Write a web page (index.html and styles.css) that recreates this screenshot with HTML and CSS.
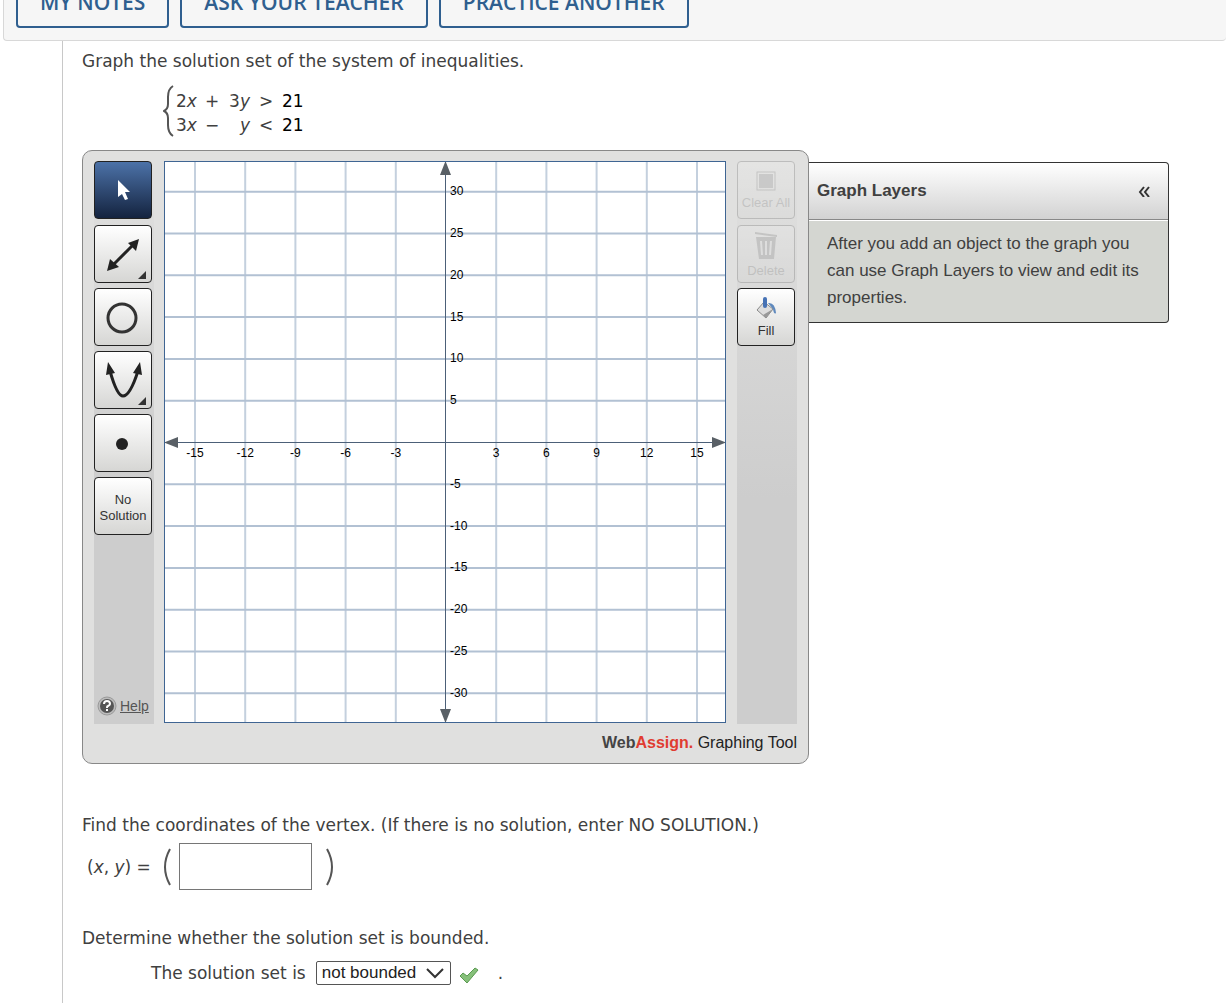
FILE: index.html
```html
<!DOCTYPE html>
<html lang="en">
<head>
  <meta charset="UTF-8">
  <meta name="viewport" content="width=device-width, initial-scale=1.0">
  <title>Systems of Inequalities</title>
  <link rel="stylesheet" href="styles.css">
</head>
<body>
  <div class="toolbar">
    <button type="button">MY NOTES</button>
    <button type="button">ASK YOUR TEACHER</button>
    <button type="button">PRACTICE ANOTHER</button>
  </div>

  <main class="question">
    <p>Graph the solution set of the system of inequalities.</p>

    <div class="system">
      <svg class="brace" width="12" height="52" viewBox="0 0 12 52">
        <path d="M10 1 Q5 4 5 12 V19 Q5 24 1 26 Q5 28 5 33 V40 Q5 48 10 51" />
      </svg>
      <div class="equations">
        <span>2<i>x</i></span><span class="op">+</span><span class="term">3<i>y</i></span><span class="op">&gt;</span><span class="num">21</span>
        <span>3<i>x</i></span><span class="op">−</span><span class="term"><i>y</i></span><span class="op">&lt;</span><span class="num">21</span>
      </div>
    </div>

    <div class="graph-area">
      <div class="graph-tool">
        <div class="panels">
          <div class="strip">
            <button type="button" class="tool selected" aria-label="Select">
              <svg width="56" height="56" viewBox="0 0 56 56">
                <path fill="#fff" d="M23 17 V34 L27 31 L30 37 L33 36 L30 29 L35 29 Z" />
              </svg>
            </button>
            <button type="button" class="tool" aria-label="Line">
              <svg width="56" height="56" viewBox="0 0 56 56">
                <path stroke="#222" stroke-width="3" d="M18 38 L38 18" />
                <path fill="#222" d="M44 12 L41 24 L33 16 Z M12 44 L15 32 L24 40 Z" />
                <path fill="#333" d="M51 44 V52 H43 Z" />
              </svg>
            </button>
            <button type="button" class="tool" aria-label="Circle">
              <svg width="56" height="56" viewBox="0 0 56 56">
                <circle cx="27" cy="28" r="14" fill="none" stroke="#333" stroke-width="3" />
              </svg>
            </button>
            <button type="button" class="tool" aria-label="Parabola">
              <svg width="56" height="56" viewBox="0 0 56 56">
                <path fill="none" stroke="#222" stroke-width="3" d="M15 18 Q22 43 28 43 Q35 43 43 18" />
                <path fill="#222" d="M13 9 L20 20 L11 22 Z M45 9 L47 22 L38 20 Z" />
                <path fill="#333" d="M51 44 V52 H43 Z" />
              </svg>
            </button>
            <button type="button" class="tool" aria-label="Point">
              <svg width="56" height="56" viewBox="0 0 56 56">
                <circle cx="27" cy="28" r="6" fill="#222" />
              </svg>
            </button>
            <button type="button" class="tool no-solution"><span>No<br>Solution</span></button>
            <a class="help" href="#">
              <svg width="20" height="20" viewBox="0 0 20 20">
                <circle cx="10" cy="10" r="9" fill="#bbb" stroke="#999" />
                <circle cx="10" cy="10" r="7" fill="#555" />
                <path fill="none" stroke="#fff" stroke-width="2" d="M7 8 Q7 5 10 5 Q13 5 13 8 Q13 9 11 10 Q10 10 10 12 M10 13 V15" />
              </svg>
              <span>Help</span>
            </a>
          </div>

          <svg class="plot" id="plot" width="562" height="562" viewBox="0 0 562 562"></svg>

          <div class="strip">
            <button type="button" class="tool" disabled>
              <svg width="20" height="20" viewBox="0 0 20 20">
                <rect x="1" y="1" width="18" height="18" fill="none" stroke="#333" />
                <rect x="3" y="3" width="14" height="14" fill="#555" />
              </svg>
              <span>Clear All</span>
            </button>
            <button type="button" class="tool" disabled>
              <svg width="24" height="28" viewBox="0 0 24 28">
                <path fill="#444" d="M1 1 L23 4 V6 L1 3 Z M2 6 H22 L20 28 H5 Z" />
                <path stroke="#eee" stroke-width="2" d="M7 10 L8 24 M12 10 V24 M17 10 L16 24" />
              </svg>
              <span>Delete</span>
            </button>
            <button type="button" class="tool">
              <svg width="22" height="22" viewBox="0 0 22 22">
                <path fill="#ddd" stroke="#888" d="M9 5 L18 12 L11 21 L2 13 Z" />
                <path fill="#999" d="M18 12 L11 21 L8 18 Z" />
                <path fill="#5f89bd" d="M13 6 Q20 5 21 16 Q19 18 18 12 Z" />
                <rect x="8" y="0" width="4" height="11" rx="2" fill="#4672b5" />
              </svg>
              <span>Fill</span>
            </button>
          </div>
        </div>
        <div class="brand"><b>Web<em>Assign.</em></b> Graphing Tool</div>
      </div>

      <aside class="layers">
        <header>
          <h2>Graph Layers</h2>
          <button type="button" aria-label="Collapse">
            <svg width="14" height="12" viewBox="0 0 14 12">
              <path d="M7 2 L3 7 L7 12 M12 2 L8 7 L12 12" />
            </svg>
          </button>
        </header>
        <p>After you add an object to the graph you can use Graph Layers to view and edit its properties.</p>
      </aside>
    </div>

    <p>Find the coordinates of the vertex. (If there is no solution, enter NO SOLUTION.)</p>
    <div class="vertex">
      <label for="vertex">(<i>x</i>, <i>y</i>) =</label>
      <svg class="paren" width="8" height="38" viewBox="0 0 8 38"><path d="M7 1 Q-3 19 7 37" /></svg>
      <input type="text" id="vertex">
      <svg class="paren" width="8" height="38" viewBox="0 0 8 38"><path d="M1 1 Q11 19 1 37" /></svg>
    </div>

    <p>Determine whether the solution set is bounded.</p>
    <div class="bounded">
      <label for="bounded">The solution set is</label>
      <div class="select">
        <select id="bounded">
          <option>---Select---</option>
          <option>bounded</option>
          <option selected>not bounded</option>
        </select>
        <svg width="18" height="12" viewBox="0 0 18 12"><path d="M1 2 L9 10 L17 2" /></svg>
      </div>
      <svg class="check" width="20" height="18" viewBox="0 0 20 18">
        <path d="M1 10 L4 7 L8 10 L16 2 L19 4 L8 17 Z" />
      </svg>
      <span>.</span>
    </div>
  </main>

  <script>
    // draw the grid, axes and tick labels
    const centerX = 282;
    const centerY = 281.5;
    const stepX = 50.2;
    const stepY = 41.8;
    let grid = '';
    let labels = '';

    for (let i = -5; i <= 5; i++) {
      if (i === 0) continue;
      const x = centerX + i * stepX;
      grid += `<line class="grid-x" x1="${x}" y1="0" x2="${x}" y2="562" />`;
      labels += `<text x="${x}" y="296" text-anchor="middle">${i * 3}</text>`;
    }
    for (let i = -6; i <= 6; i++) {
      if (i === 0) continue;
      const y = centerY - i * stepY;
      grid += `<line class="grid-y" x1="0" y1="${y}" x2="562" y2="${y}" />`;
      labels += `<text x="286" y="${y + 3.5}">${i * 5}</text>`;
    }

    document.getElementById('plot').innerHTML = grid + `
      <path class="axis" d="M0 281.5 H562 M281.5 0 V562" />
      <path class="arrow" d="M0 281.5 L14 276 V287 Z M562 281.5 L548 276 V287 Z" />
      <path class="arrow" d="M281.5 0 L276 14 H287 Z M281.5 562 L276 548 H287 Z" />
      ${labels}
      <rect class="frame" x="0.5" y="0.5" width="561" height="561" />`;
  </script>
</body>
</html>
```
FILE: styles.css
```css
* {
  box-sizing: border-box;
}

body {
  font-family: Verdana, "DejaVu Sans", sans-serif;
  font-size: 17px;
  line-height: 24px;
  color: #404040;
  background: #fff;
  margin: 0;
}

p {
  margin: 0;
}

button {
  font-family: inherit;
  cursor: pointer;
}

/* Top buttons */
.toolbar {
  display: flex;
  gap: 11px;
  margin: -25px 0 0 3px;
  padding: 0 12px 12px;
  background: #f6f6f6;
  border: 1px solid #d8d8d8;
  border-right: none;
  border-radius: 4px;
}

.toolbar button {
  height: 52px;
  padding: 0 22px;
  font: 600 21px/24px "Open Sans", sans-serif;
  color: #2f5f8f;
  background: #f6f6f6;
  border: 2px solid #2f5f8f;
  border-radius: 4px;
}

/* Question body */
.question {
  margin-left: 62px;
  padding: 8px 0 18px 19px;
  border-left: 1px solid #c8c8c8;
}

.system {
  display: flex;
  align-items: flex-end;
  gap: 1px;
  margin: 12px 0 13px 81px;
}

.brace,
.paren {
  fill: none;
  stroke: #555;
  stroke-width: 2;
}

.equations {
  display: grid;
  grid-template-columns: 22px 28px 24px 32px auto;
}

.op {
  text-align: center;
}

.term {
  text-align: right;
}

.num {
  color: #000;
}

/* Graphing tool */
.graph-area {
  display: flex;
  align-items: flex-start;
  margin-bottom: 49px;
  font-family: "Liberation Sans", Arial, sans-serif;
}

.graph-tool {
  flex: none;
  padding: 10px 11px 8px;
  background: #e0e0df;
  border: 1px solid #888;
  border-radius: 10px;
}

.panels {
  display: flex;
  gap: 10px;
}

.plot + .strip {
  margin-left: 1px;
}

.strip {
  display: flex;
  flex-direction: column;
  gap: 5px;
  width: 60px;
  height: 563px;
  background: linear-gradient(#e0e0df, #cdcdcd 60%);
}

.tool {
  display: flex;
  flex-direction: column;
  align-items: center;
  justify-content: center;
  gap: 4px;
  width: 58px;
  height: 58px;
  padding: 2px 0 0;
  font: 13px/16px "Liberation Sans", Arial, sans-serif;
  color: #333;
  background: linear-gradient(#fff, #d6d6d4);
  border: 1px solid #222;
  border-radius: 4px;
}

.tool:first-child {
  margin-bottom: 1px;
}

.tool.selected {
  background: linear-gradient(#4c72a8, #14233f);
}

.tool.no-solution {
  padding-top: 4px;
}

.tool:disabled {
  opacity: 0.15;
  border-color: #000;
}

.tool svg {
  flex: none;
}

.help {
  display: flex;
  align-items: center;
  gap: 3px;
  margin: auto 0 8px 3px;
  font-size: 14px;
  line-height: 20px;
  color: #555;
}

.plot {
  flex: none;
  background: #fff;
  font-size: 12px;
}

.grid-x {
  stroke: #c4d0de;
  stroke-width: 2;
}

.grid-y {
  stroke: #b2c1d3;
  stroke-width: 2;
}

.axis {
  stroke: #4c6078;
  stroke-width: 1;
}

.arrow {
  fill: #596066;
}

.frame {
  fill: none;
  stroke: #3f6593;
}

.brand {
  margin-top: 7px;
  font-size: 16px;
  text-align: right;
  color: #222;
}

.brand b {
  color: #444;
}

.brand em {
  font-style: normal;
  color: #e03c31;
}

/* Graph layers */
.layers {
  flex: 0 1 360px;
  margin-top: 12px;
  background: #d4d6d1;
  border: 1px solid #333;
  border-left: none;
  border-radius: 0 4px 4px 0;
}

.layers header {
  display: flex;
  align-items: center;
  justify-content: space-between;
  height: 57px;
  padding: 0 17px 0 8px;
  background: linear-gradient(#fff, #d2d2d2);
  border-bottom: 1px solid #888;
  border-radius: 0 4px 0 0;
}

.layers h2 {
  margin: 0;
  font-size: 17px;
}

.layers button {
  display: flex;
  padding: 0;
  background: none;
  border: none;
}

.layers button path {
  fill: none;
  stroke: #333;
  stroke-width: 2;
}

.layers p {
  padding: 9px 24px 11px 18px;
  font-size: 17px;
  line-height: 27px;
  border-top: 1px solid #fff;
}

/* Answers */
.vertex {
  display: flex;
  align-items: center;
  gap: 8px;
  margin: 6px 0 36px 5px;
}

.vertex label {
  margin-right: 4px;
}

.vertex input {
  width: 133px;
  height: 47px;
  margin-right: 6px;
  font-size: 17px;
  border: 1px solid #767676;
}

.bounded {
  display: flex;
  align-items: center;
  gap: 8px;
  margin: 11px 0 0 69px;
}

.bounded label {
  margin-right: 2px;
}

.select {
  position: relative;
}

.select select {
  display: block;
  width: 135px;
  height: 24px;
  padding: 0 5px;
  appearance: none;
  font: 17px/20px "Liberation Sans", Arial, sans-serif;
  color: #222;
  background: #fff;
  border: 1px solid #555;
  border-radius: 2px;
}

.select svg {
  position: absolute;
  top: 6px;
  right: 7px;
  fill: none;
  stroke: #333;
  stroke-width: 2;
  pointer-events: none;
}

.check {
  margin: 4px 11px 0 0;
  fill: #86c07a;
  stroke: #5a9a50;
}
```
